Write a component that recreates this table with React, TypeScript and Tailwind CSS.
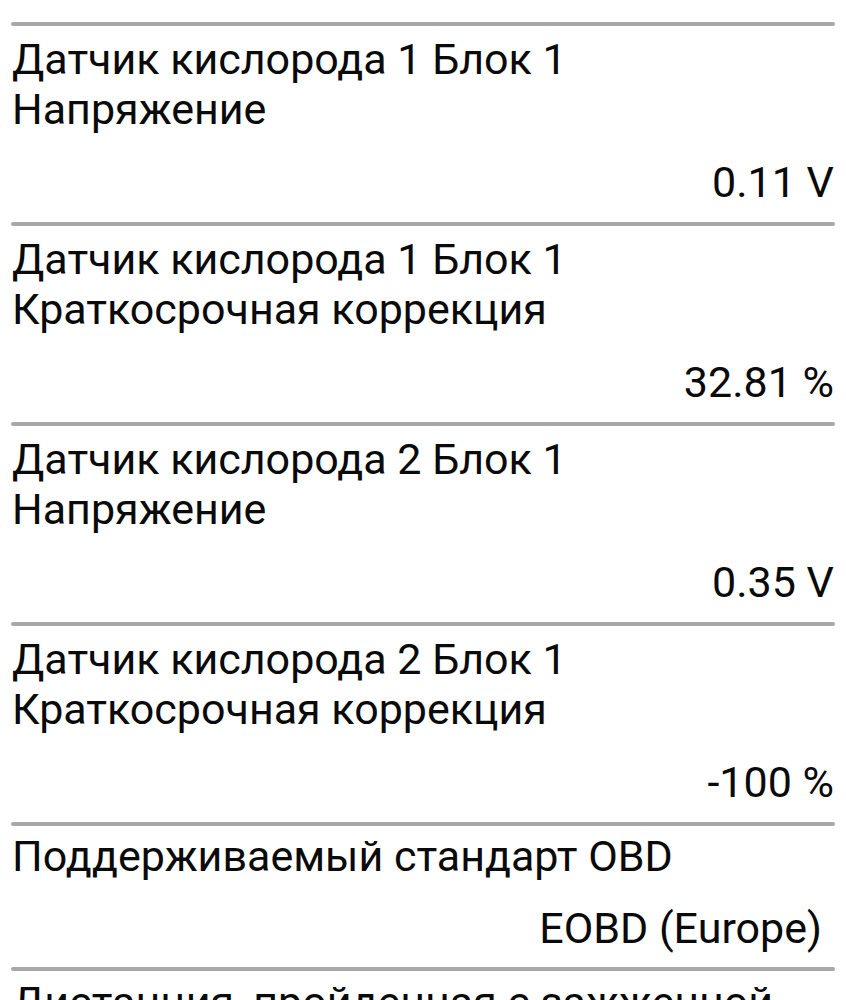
import React from "react";

interface Row {
  title: string[];
  value: string;
  valuePad?: string;
}

const rows: Row[] = [
  { title: ["Датчик кислорода 1 Блок 1", "Напряжение"], value: "0.11 V" },
  { title: ["Датчик кислорода 1 Блок 1", "Краткосрочная коррекция"], value: "32.81 %" },
  { title: ["Датчик кислорода 2 Блок 1", "Напряжение"], value: "0.35 V" },
  { title: ["Датчик кислорода 2 Блок 1", "Краткосрочная коррекция"], value: "-100 %" },
];

const Divider = () => <div className="mx-[11px] h-[4px] rounded-full bg-[#a8a8a8]" />;

export default function App() {
  return (
    <div
      className="w-[846px] h-[1000px] overflow-hidden bg-white text-[#0a0a0a] pt-[22px] text-[43px] leading-[50px]"
      style={{ fontFamily: "Roboto, 'Noto Sans', sans-serif" }}
    >
      {rows.map((row, i) => (
        <div key={i}>
          <Divider />
          <div className="pt-[8px] pb-[15px]">
            <div className="pl-[12px]">
              {row.title.map((t, j) => (
                <div key={j}>{t}</div>
              ))}
            </div>
            <div className="mt-[23px] text-right pr-[12px]">{row.value}</div>
          </div>
        </div>
      ))}
      <Divider />
      <div className="pt-[5px] pb-[14px]">
        <div className="pl-[12px]">Поддерживаемый стандарт OBD</div>
        <div className="mt-[22px] text-right pr-[24px]">EOBD (Europe)</div>
      </div>
      <Divider />
      <div className="pt-[6px] pl-[12px] whitespace-nowrap">Дистанция, пройденная с зажженной</div>
    </div>
  );
}
